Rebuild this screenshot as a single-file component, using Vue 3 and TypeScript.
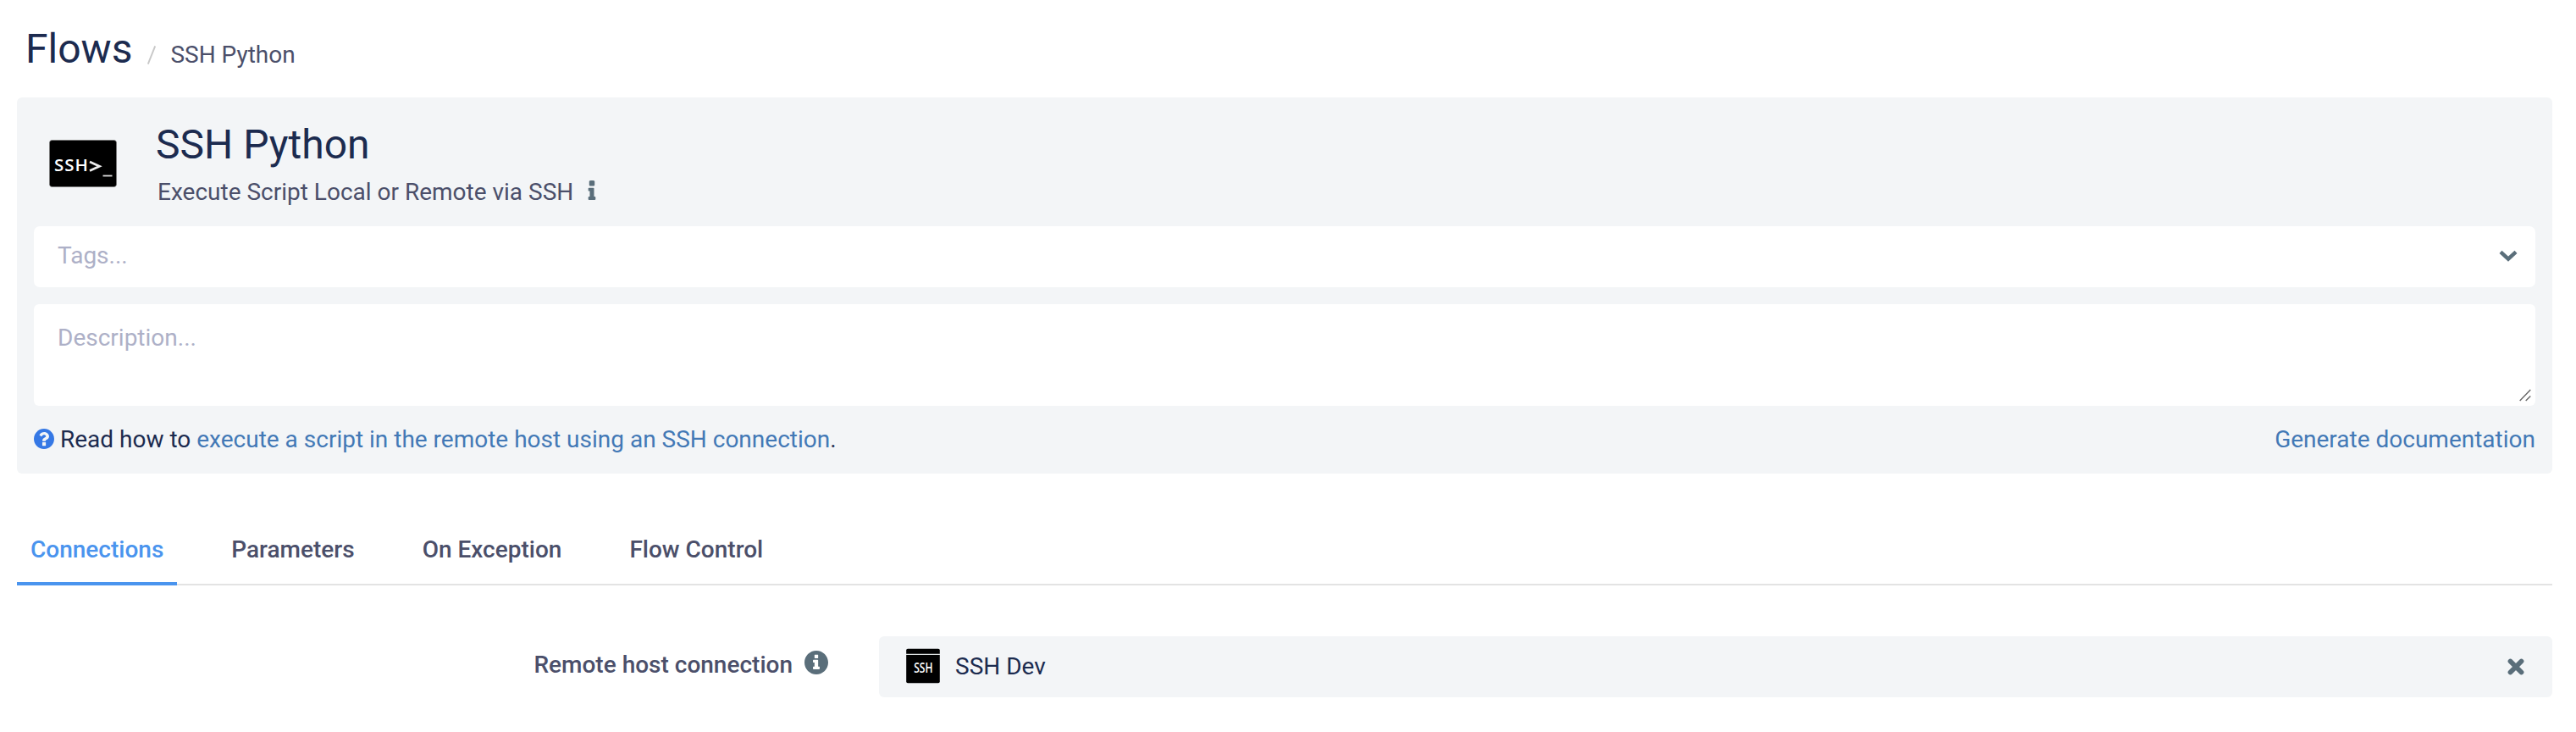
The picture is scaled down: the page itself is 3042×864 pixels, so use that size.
<script setup lang="ts">
import { ref } from 'vue'

const tabs: string[] = ['Connections', 'Parameters', 'On Exception', 'Flow Control']
const activeTab = ref<string>('Connections')
const description = ref<string>('')
</script>

<template>
  <main class="page">
    <nav class="breadcrumb">
      <span class="crumb-root">Flows</span>
      <svg class="crumb-slash" viewBox="0 0 10 22"><path d="M0.8 21.6 9.2 0.4" stroke="#c8c8c8" stroke-width="1.9" fill="none" /></svg>
      <span class="crumb-current">SSH Python</span>
    </nav>

    <section class="panel">
      <header class="panel-head">
        <svg class="flow-logo" viewBox="0 0 80 56">
          <rect x="0.5" y="0.5" width="79" height="55" rx="3" fill="#000" stroke="#777" stroke-width="0.6" />
          <text x="6" y="37" class="logo-text" textLength="40" lengthAdjust="spacing">SSH</text>
          <path d="M48 26 59.5 31.3 48 36.6" fill="none" stroke="#eee" stroke-width="2.7" />
          <path d="M63.5 42.5H74.5" stroke="#ddd" stroke-width="1.8" />
        </svg>
        <div class="headings">
          <h1 class="title">SSH Python</h1>
          <div class="subtitle">
            <span>Execute Script Local or Remote via SSH</span>
            <svg class="info" viewBox="0 0 192 512"><path fill="#5a6e7a" d="M20 424.229h20V279.771H20c-11.046 0-20-8.954-20-20V212c0-11.046 8.954-20 20-20h112c11.046 0 20 8.954 20 20v212.229h20c11.046 0 20 8.954 20 20V492c0 11.046-8.954 20-20 20H20c-11.046 0-20-8.954-20-20v-47.771c0-11.046 8.954-20 20-20zM96 0C56.235 0 24 0 24 24v96c0 24 32.235 24 72 24s72 0 72-24V24C168 0 135.764 0 96 0z" /></svg>
          </div>
        </div>
      </header>

      <div class="tags">
        <span>Tags...</span>
        <svg class="chevron" viewBox="0 0 22 14"><path d="M2 2.4 11 10.7 20 2.4" fill="none" stroke="#5a6e7a" stroke-width="4.4" stroke-linejoin="miter" /></svg>
      </div>

      <div class="description">
        <textarea v-model="description" placeholder="Description..."></textarea>
        <svg class="grip" viewBox="0 0 14 15"><path d="M0.7 14 13.3 1M7.7 14 13.3 8.4" fill="none" stroke="#666" stroke-width="1.4" /></svg>
      </div>

      <footer class="panel-foot">
        <svg class="help" viewBox="8 8 496 496"><path fill="#3578e5" d="M504 256c0 136.997-111.043 248-248 248S8 392.997 8 256C8 119.083 119.043 8 256 8s248 111.083 248 248zM262.655 90c-54.497 0-89.255 22.957-116.549 63.758-3.536 5.286-2.353 12.415 2.715 16.258l34.699 26.31c5.205 3.947 12.621 3.008 16.665-2.122 17.864-22.658 30.113-35.797 57.303-35.797 20.429 0 45.698 13.148 45.698 32.958 0 14.976-12.363 22.667-32.534 33.976C247.128 238.528 216 254.941 216 296v4c0 6.627 5.373 12 12 12h56c6.627 0 12-5.373 12-12v-1.333c0-28.462 83.186-29.647 83.186-106.667 0-58.002-60.165-102-116.531-102zM222 338q-8 0-8 8v72q0 8 8 8h70q8 0 8-8v-72q0-8-8-8z" /></svg>
        <span class="read">Read how to <a>execute a script in the remote host using an SSH connection</a>.</span>
        <a class="generate">Generate documentation</a>
      </footer>
    </section>

    <div class="tabs" role="tablist">
      <button
        v-for="tab in tabs"
        :key="tab"
        type="button"
        role="tab"
        :class="['tab', { active: tab === activeTab }]"
        @click="activeTab = tab"
      >{{ tab }}</button>
    </div>

    <div class="field-row">
      <div class="field-label">
        <span>Remote host connection</span>
        <svg class="info-circle" viewBox="8 8 496 496"><path fill="#5a6e7a" d="M256 8C119.043 8 8 119.083 8 256c0 136.997 111.043 248 248 248s248-111.003 248-248C504 119.083 392.957 8 256 8zm-30 82h60q8 0 8 8v60q0 8-8 8h-60q-8 0-8-8v-60q0-8 8-8zm100 294c0 6.627-5.373 12-12 12H198c-6.627 0-12-5.373-12-12v-34c0-6.627 5.373-12 12-12h20v-80h-20c-6.627 0-12-5.373-12-12v-34c0-6.627 5.373-12 12-12h84c6.627 0 12 5.373 12 12v126h20c6.627 0 12 5.373 12 12v34z" /></svg>
      </div>
      <div class="field-value">
        <svg class="conn-logo" viewBox="0 0 40 42">
          <rect x="0.2" y="0.8" width="39.6" height="40.4" rx="1.8" fill="#000" />
          <path d="M0 7.4H40" stroke="#dfe4e4" stroke-width="1.4" />
          <text x="9.2" y="29" class="conn-text" textLength="22.4" lengthAdjust="spacingAndGlyphs">SSH</text>
        </svg>
        <span>SSH Dev</span>
        <svg class="remove" viewBox="0 0 20 20"><path d="M3.5 3.5 16.5 16.5M16.5 3.5 3.5 16.5" fill="none" stroke="#5a6e7a" stroke-width="5.8" stroke-linecap="round" /></svg>
      </div>
    </div>
  </main>
</template>

<style>
body {
  margin: 0;
  background: #fff;
}
</style>

<style scoped>
.page {
  box-sizing: border-box;
  height: 864px;
  padding: 0 28px 0 20px;
  overflow: hidden;
  font-family: Roboto, "Liberation Sans", sans-serif;
  font-size: 28px;
  line-height: 33px;
  color: #4b4f6a;
}
svg {
  display: block;
  flex: none;
}
.breadcrumb {
  display: flex;
  align-items: baseline;
  box-sizing: border-box;
  height: 115px;
  padding: 29px 0 0 10px;
}
.crumb-root {
  font-size: 48px;
  line-height: 57px;
  color: #1c2b4f;
}
.crumb-slash {
  width: 10px;
  height: 22px;
  margin: 0 17px 0 18px;
  transform: translateY(2px);
}
.panel {
  box-sizing: border-box;
  height: 444px;
  padding: 0 20px;
  border-radius: 6px;
  background: #f3f5f7;
}
.panel-head {
  display: flex;
  height: 152px;
}
.flow-logo {
  width: 80px;
  height: 56px;
  margin: 50px 46px 0 18px;
}
.logo-text,
.conn-text {
  font-family: "Open Sans", "Noto Sans", sans-serif;
  fill: #fff;
}
.logo-text {
  font-size: 20.5px;
  font-weight: 600;
}
.conn-text {
  font-size: 16.6px;
  font-weight: 600;
}
.headings {
  padding-top: 27px;
}
.title {
  margin: 0;
  font-size: 48px;
  font-weight: 400;
  line-height: 57px;
  color: #1c2b4f;
}
.subtitle {
  display: flex;
  margin: 11px 0 0 2px;
}
.info {
  width: 10px;
  height: 23px;
  margin: 3px 0 0 17px;
}
.tags {
  display: flex;
  justify-content: space-between;
  box-sizing: border-box;
  height: 72px;
  padding: 18px 21px 0 28px;
  border-radius: 7px;
  background: #fff;
  color: #adb0c7;
}
.chevron {
  width: 22px;
  height: 14px;
  margin-top: 10px;
}
.description {
  position: relative;
  height: 120px;
  margin-top: 20px;
}
textarea {
  display: block;
  box-sizing: border-box;
  width: 100%;
  height: 120px;
  padding: 23px 28px;
  border: 0;
  border-radius: 6px;
  outline: 0;
  resize: none;
  background: #fff;
  font: inherit;
  color: #1c2b4f;
}
textarea::placeholder {
  color: #adb0c7;
  opacity: 1;
}
.grip {
  position: absolute;
  right: 5px;
  bottom: 5px;
  width: 14px;
  height: 15px;
}
.panel-foot {
  display: flex;
  padding-top: 23px;
  color: #1c2b4f;
}
.help {
  width: 24px;
  height: 24px;
  margin: 4px 7px 0 0;
}
.generate {
  margin-left: auto;
}
a {
  color: #4379b6;
}
.tabs {
  display: flex;
  gap: 48px;
  box-sizing: border-box;
  height: 72px;
  margin-top: 60px;
  border-bottom: 2px solid #e3e3e3;
}
.tab {
  box-sizing: border-box;
  height: 72px;
  padding: 13px 16px 22px;
  border: 0;
  border-bottom: 4px solid transparent;
  background: none;
  font: inherit;
  font-weight: 500;
  color: #4b4f6a;
}
.tab.active {
  border-bottom-color: #4a94ee;
  color: #4a94ee;
}
.field-row {
  display: grid;
  grid-template-columns: 958px 1fr;
  column-gap: 60px;
  height: 72px;
  margin-top: 60px;
}
.field-label {
  display: flex;
  justify-content: flex-end;
  padding-top: 17px;
  font-weight: 500;
}
.info-circle {
  width: 28px;
  height: 28px;
  margin: 0 0 0 14px;
}
.field-value {
  display: flex;
  box-sizing: border-box;
  padding: 19px 33px 0 32px;
  border-radius: 6px;
  background: #f3f5f7;
  color: #1c2b4f;
}
.conn-logo {
  width: 40px;
  height: 42px;
  margin: -5px 18px 0 0;
}
.remove {
  width: 20px;
  height: 20px;
  margin: 7px 0 0 auto;
}
</style>
